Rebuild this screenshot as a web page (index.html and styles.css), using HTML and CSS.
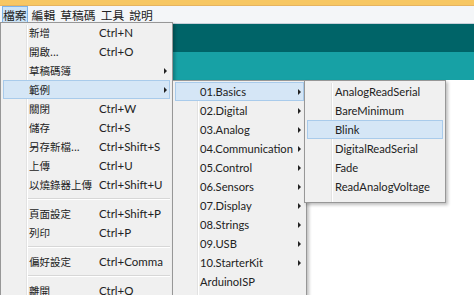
FILE: index.html
```html
<!DOCTYPE html>
<html lang="zh-Hant">
<head>
  <meta charset="UTF-8" />
  <title>Arduino - 檔案</title>
  <link rel="stylesheet" href="styles.css">
</head>
<body>

<div class="app">
  <div class="titlebar"></div>

  <!-- 主選單 -->
  <div class="menubar">
    <span class="mb-item active">檔案</span>
    <span class="mb-item">編輯</span>
    <span class="mb-item">草稿碼</span>
    <span class="mb-item">工具</span>
    <span class="mb-item">說明</span>
  </div>

  <div class="toolbar"></div>
  <div class="tabs"></div>
  <div class="editor"></div>

  <!-- 檔案選單 -->
  <div class="menu menu-file">
    <div class="row"><span class="label">新增</span><span class="key">Ctrl+N</span></div>
    <div class="row"><span class="label">開啟...</span><span class="key">Ctrl+O</span></div>
    <div class="row sub"><span class="label">草稿碼簿</span><span class="key"></span></div>
    <div class="row sub hover"><span class="label">範例</span><span class="key"></span></div>
    <div class="row"><span class="label">關閉</span><span class="key">Ctrl+W</span></div>
    <div class="row"><span class="label">儲存</span><span class="key">Ctrl+S</span></div>
    <div class="row"><span class="label">另存新檔...</span><span class="key">Ctrl+Shift+S</span></div>
    <div class="row"><span class="label">上傳</span><span class="key">Ctrl+U</span></div>
    <div class="row"><span class="label">以燒錄器上傳</span><span class="key">Ctrl+Shift+U</span></div>
    <div class="sep"></div>
    <div class="row"><span class="label">頁面設定</span><span class="key">Ctrl+Shift+P</span></div>
    <div class="row"><span class="label">列印</span><span class="key">Ctrl+P</span></div>
    <div class="sep"></div>
    <div class="row"><span class="label">偏好設定</span><span class="key">Ctrl+Comma</span></div>
    <div class="sep"></div>
    <div class="row"><span class="label">離開</span><span class="key">Ctrl+Q</span></div>
  </div>

  <!-- 範例子選單 -->
  <div class="menu menu-examples">
    <div class="row sub hover"><span class="label">01.Basics</span></div>
    <div class="row sub"><span class="label">02.Digital</span></div>
    <div class="row sub"><span class="label">03.Analog</span></div>
    <div class="row sub"><span class="label">04.Communication</span></div>
    <div class="row sub"><span class="label">05.Control</span></div>
    <div class="row sub"><span class="label">06.Sensors</span></div>
    <div class="row sub"><span class="label">07.Display</span></div>
    <div class="row sub"><span class="label">08.Strings</span></div>
    <div class="row sub"><span class="label">09.USB</span></div>
    <div class="row sub"><span class="label">10.StarterKit</span></div>
    <div class="row"><span class="label">ArduinoISP</span></div>
  </div>

  <!-- Basics 子選單 -->
  <div class="menu menu-basics">
    <div class="row"><span class="label">AnalogReadSerial</span></div>
    <div class="row"><span class="label">BareMinimum</span></div>
    <div class="row hover"><span class="label">Blink</span></div>
    <div class="row"><span class="label">DigitalReadSerial</span></div>
    <div class="row"><span class="label">Fade</span></div>
    <div class="row"><span class="label">ReadAnalogVoltage</span></div>
  </div>
</div>

</body>
</html>
```

FILE: styles.css
```css
* { margin: 0; padding: 0; box-sizing: border-box; }
body {
  background: white;
  font-family: Lato, "Noto Sans CJK TC", sans-serif;
  font-size: 11.2px;
  color: #222;
}

.app {
  position: relative;
  width: 474px;
  height: 295px;
  overflow: hidden;
  display: flex;
  flex-direction: column;
}

.titlebar {
  height: 6px;
  background: #f7c763;
  border-bottom: 1px solid #e6b460;
}

/* 主選單列 */
.menubar {
  height: 18px;
  display: flex;
  align-items: center;
  gap: 3px;
  padding-left: 2px;
  background: #f4f6f8;
  border-bottom: 1px solid #c7d0da;
  font-family: "Noto Sans CJK TC", sans-serif;
  font-size: 11.8px;
}
.mb-item {
  line-height: 15px;
  border: 1px solid transparent;
}
.mb-item.active {
  background: #cce4f7;
  border-color: #7eb4ea;
}

.toolbar { height: 28px; background: #006468; }
.tabs { height: 28px; background: #17a1a5; }
.editor { flex: 1; background: white; }

/* 下拉選單 */
.menu {
  position: absolute;
  background: #f0f0f0;
  border: 1px solid #979797;
  padding: 1px 2px 2px;
  box-shadow: 2px 2px 3px rgba(0,0,0,0.25);
}
.menu::before {
  content: "";
  position: absolute;
  top: 2px; bottom: 0;
  width: 1px;
  background: #e2e2e2;
  border-right: 1px solid white;
}
.row {
  position: relative;
  display: flex;
  height: 19px;
  align-items: center;
  border: 1px solid transparent;
}
.row.hover {
  background: #d5e6f6;
  border-color: #a9cbeb;
}
.row.sub::after {
  content: "";
  position: absolute;
  right: 2px;
  top: 6px;
  border-left: 3px solid #222;
  border-top: 3px solid transparent;
  border-bottom: 3px solid transparent;
}
.sep {
  height: 1px;
  background: #d7d7d7;
  border-bottom: 1px solid white;
  margin: 4px 0 4px 24px;
  box-sizing: content-box;
}

.menu-file {
  left: 0; top: 22px;
  width: 173px;
  height: 280px;
  padding-top: 0;
  font-family: "Noto Sans CJK TC", sans-serif;
  font-size: 10.5px;
}
.menu-file::before { left: 25px; }
.menu-file .label { width: 70px; padding-left: 25px; box-sizing: content-box; white-space: nowrap; }
.menu-file .key { font-family: Lato, sans-serif; font-size: 11.5px; }

.menu-examples {
  left: 172px; top: 80px;
  width: 135px;
  height: 225px;
}
.menu-examples::before { left: 24px; }
.menu-examples .label { padding-left: 24px; }

.menu-basics {
  left: 304px; top: 80px;
  width: 142px;
  padding-bottom: 6px;
}
.menu-basics::before { left: 26px; }
.menu-basics .label { padding-left: 27px; }
```
